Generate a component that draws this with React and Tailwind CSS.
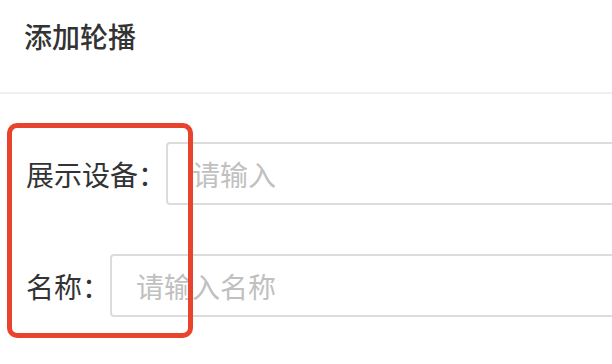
import React from "react";

const fontStack = { fontFamily: '"Noto Sans CJK SC", "Noto Sans", sans-serif' };

function Field({ label, placeholder }) {
  return (
    <div className="flex items-center">
      <label className="shrink-0 text-[28px] text-[#333] leading-none">
        {label}
      </label>
      <input
        type="text"
        placeholder={placeholder}
        className="flex-1 min-w-0 h-[63px] border-2 border-[#dcdcdc] rounded-[4px] px-[24px] text-[28px] text-[#333] placeholder:text-[#c0c0c0] outline-none"
        style={fontStack}
      />
    </div>
  );
}

export default function App() {
  return (
    <div className="w-[612px] h-[364px] overflow-hidden bg-white relative" style={fontStack}>
      <div className="h-[92px] pl-[24px] pt-[16px]">
        <h1 className="text-[28px] leading-[40px] font-medium text-[#333]">添加轮播</h1>
      </div>
      <div className="h-[2px] bg-[#efefef]" />
      <form className="pt-[48px] pl-[26px] flex flex-col gap-[49px] -mr-[20px]">
        <Field label="展示设备：" placeholder="请输入" />
        <Field label="名称：" placeholder="请输入名称" />
      </form>
      {/* annotation box */}
      <div className="absolute left-[7px] top-[123px] w-[186px] h-[215px] border-[5px] border-[#e8432c] rounded-[10px] pointer-events-none" />
    </div>
  );
}
